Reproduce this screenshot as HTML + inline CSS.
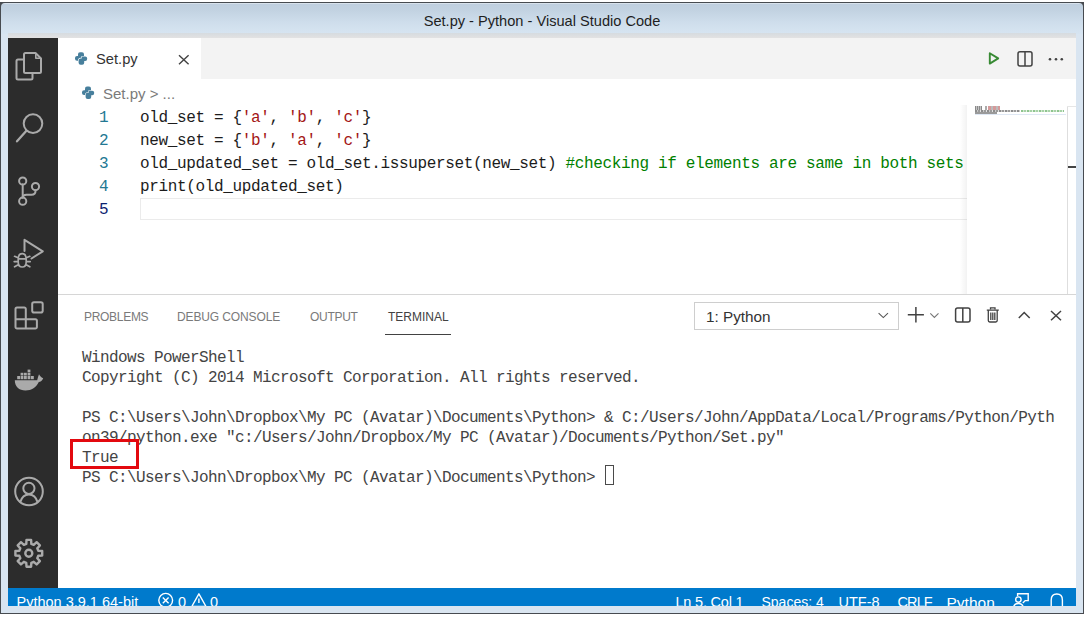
<!DOCTYPE html>
<html><head><meta charset="utf-8">
<style>
*{margin:0;padding:0;box-sizing:border-box}
html,body{width:1088px;height:621px;overflow:hidden;background:#fff;position:relative;font-family:"Liberation Sans",sans-serif}
.a{position:absolute}
.mono{font-family:"Liberation Mono",monospace;white-space:pre}
#frame{left:0;top:2px;width:1084px;height:612px;background:#474b50}
#title{left:1px;top:3px;width:1082px;height:610px;background:linear-gradient(#e4ecf3 0,#bfcfdf 1.5px,#c3d3e2 8px,#cfdeec 20px,#d6e4f1 30px,#d9e5f1 40px);border-radius:4px 4px 0 0}
#band{left:8px;top:33px;width:1068px;height:5px;background:linear-gradient(#d6dbe0,#e2e2e2)}
#titletxt{left:0;top:12px;width:1084px;text-align:center;font-size:14.6px;color:#1e1e1e;line-height:18px}
#content{left:8px;top:38px;width:1068px;height:568px;background:#fff;overflow:hidden}
#act{left:8px;top:38px;width:50px;height:550px;background:#2c2c2c}
#tabs{left:58px;top:38px;width:1018px;height:41px;background:#f3f3f3}
#tab{left:58px;top:38px;width:143px;height:41px;background:#fff}
#status{left:8px;top:588px;width:1068px;height:18px;background:#007acc;overflow:hidden;color:#fff;font-size:14.5px}
#status span{position:absolute;top:6px;line-height:17px;white-space:pre}
.ln{color:#237893;font-size:16px;line-height:23px;letter-spacing:-0.35px}
.code{color:#1c1c1c;font-size:16px;line-height:23px;letter-spacing:-0.35px}
.str{color:#a31515}
.cmt{color:#008000}
.term{color:#444;font-size:16px;line-height:20px;letter-spacing:-0.6px}
.ptitle{font-size:12px;color:#7a7a7a;letter-spacing:-0.3px;line-height:14px;white-space:pre}
svg{position:absolute;overflow:visible}
</style></head><body>
<div id="frame" class="a"></div>
<div id="title" class="a"></div>
<div id="band" class="a"></div>
<div id="titletxt" class="a">Set.py - Python - Visual Studio Code</div>
<div id="content" class="a"></div>
<div id="act" class="a"></div>
<div id="tabs" class="a"></div>
<div id="tab" class="a"></div>

<!-- tab -->
<div class="a" style="left:96px;top:50px;font-size:14.7px;color:#333;line-height:18px">Set.py</div>
<div class="a" style="left:103px;top:85px;font-size:15px;color:#7a7a7a;line-height:18px;white-space:pre">Set.py &gt; ...</div>

<!-- editor lines -->
<div class="a mono ln" style="left:99px;top:107px;width:20px">1<br>2<br>3<br>4<br><span style="color:#0b216f">5</span></div>
<div class="a" style="left:140px;top:198.3px;width:827px;height:21.5px;border:1.6px solid #ebebeb;border-right:none"></div>
<div class="a mono code" style="left:140px;top:107px">old_set = {<span class="str">'a'</span>, <span class="str">'b'</span>, <span class="str">'c'</span>}
new_set = {<span class="str">'b'</span>, <span class="str">'a'</span>, <span class="str">'c'</span>}
old_updated_set = old_set.issuperset(new_set) <span class="cmt">#checking if elements are same in both sets</span>
print(old_updated_set)
</div>
<!-- minimap shadow & ruler -->
<div class="a" style="left:960px;top:105px;width:7px;height:189px;background:linear-gradient(90deg,rgba(0,0,0,0),rgba(0,0,0,0.05))"></div>
<div class="a" style="left:1067px;top:106px;width:1px;height:188px;background:#dedede"></div>
<div class="a" style="left:1068px;top:166px;width:8px;height:2px;background:#444"></div>
<!-- minimap content -->
<div class="a" style="left:975px;top:106px;width:7px;height:1.6px;background:repeating-linear-gradient(90deg,#8a8a8a 0 1px,#c4c4c4 1px 2px)"></div>
<div class="a" style="left:985px;top:106px;width:2px;height:1.6px;background:#aaa"></div>
<div class="a" style="left:988px;top:106px;width:12px;height:1.6px;background:repeating-linear-gradient(90deg,#d49a9a 0 3px,#bbb 3px 5px)"></div>
<div class="a" style="left:975px;top:108px;width:7px;height:1.6px;background:repeating-linear-gradient(90deg,#8a8a8a 0 1px,#c4c4c4 1px 2px)"></div>
<div class="a" style="left:985px;top:108px;width:2px;height:1.6px;background:#aaa"></div>
<div class="a" style="left:988px;top:108px;width:12px;height:1.6px;background:repeating-linear-gradient(90deg,#d49a9a 0 3px,#bbb 3px 5px)"></div>
<div class="a" style="left:975px;top:110px;width:45px;height:1.6px;background:repeating-linear-gradient(90deg,#8c8c8c 0 2px,#c8c8c8 2px 3px,#9a9a9a 3px 5px,#e0e0e0 5px 6px)"></div>
<div class="a" style="left:1021px;top:110px;width:43px;height:1.6px;background:repeating-linear-gradient(90deg,#8fc48f 0 2px,#cfe6cf 2px 3px,#a6d2a6 3px 5px,#e4f2e4 5px 6px)"></div>
<div class="a" style="left:975px;top:112px;width:22px;height:1.6px;background:#9a9a9a"></div>
<div class="a" style="left:975px;top:114px;width:91px;height:1px;background:#dfe8f4"></div>
<div class="a" style="left:1067px;top:106px;width:9px;height:1px;background:#e6e6e6"></div>
<!-- panel -->
<div class="a" style="left:58px;top:294px;width:1018px;height:1px;background:#d6d6d6"></div>
<div class="a ptitle" style="left:84px;top:310px">PROBLEMS</div>
<div class="a ptitle" style="left:177px;top:310px;letter-spacing:-0.12px">DEBUG CONSOLE</div>
<div class="a ptitle" style="left:310px;top:310px">OUTPUT</div>
<div class="a ptitle" style="left:388px;top:310px;color:#424242;letter-spacing:0">TERMINAL</div>
<div class="a" style="left:385px;top:334px;width:66px;height:1px;background:#424242"></div>
<div class="a" style="left:694px;top:302px;width:205px;height:28px;border:1px solid #cecece;background:#fff"></div>
<div class="a" style="left:706px;top:307.5px;font-size:15.3px;color:#333;line-height:18px">1: Python</div>

<div class="a mono term" style="left:82px;top:347.70px">Windows PowerShell</div>
<div class="a mono term" style="left:82px;top:367.83px">Copyright (C) 2014 Microsoft Corporation. All rights reserved.</div>
<div class="a mono term" style="left:82px;top:408.09px">PS C:\Users\John\Dropbox\My PC (Avatar)\Documents\Python&gt; &amp; C:/Users/John/AppData/Local/Programs/Python/Pyth</div>
<div class="a mono term" style="left:82px;top:428.22px">on39/python.exe "c:/Users/John/Dropbox/My PC (Avatar)/Documents/Python/Set.py"</div>
<div class="a mono term" style="left:82px;top:448.35px">True</div>
<div class="a mono term" style="left:82px;top:468.48px">PS C:\Users\John\Dropbox\My PC (Avatar)\Documents\Python&gt; </div>
<div class="a" style="left:604.5px;top:465px;width:9px;height:20px;border:1px solid #4a4a4a"></div>
<div class="a" style="left:70px;top:439px;width:69px;height:29.5px;border:3.6px solid #e3090f"></div>

<div id="status" class="a">
<span style="left:8.5px">Python 3.9.1 64-bit</span>
<span style="left:170px">0</span>
<span style="left:202px">0</span>
<span style="left:667.5px;letter-spacing:-0.2px">Ln 5, Col 1</span>
<span style="left:753.5px;font-size:14px">Spaces: 4</span>
<span style="left:830.5px">UTF-8</span>
<span style="left:889.5px;letter-spacing:-0.9px">CRLF</span>
<span style="left:938.5px;font-size:15.5px">Python</span>
</div>

<svg width="1088" height="621" style="left:0;top:0" fill="none">
 <g stroke="#aaa" stroke-width="2" stroke-linejoin="round" stroke-linecap="round">
  <!-- files -->
  <path d="M23.5,59.5 H18 a1.5,1.5 0 0 0 -1.5,1.5 V78 a1.5,1.5 0 0 0 1.5,1.5 H31 a1.5,1.5 0 0 0 1.5,-1.5 V73.5"/>
  <path d="M25.5,53 H35.5 L41,58.5 V71.5 a1.5,1.5 0 0 1 -1.5,1.5 H25.5 a1.5,1.5 0 0 1 -1.5,-1.5 V54.5 a1.5,1.5 0 0 1 1.5,-1.5 Z"/>
  <path d="M35.8,54.5 V58.2 H39.5" stroke-width="1.6"/>
  <!-- search -->
  <circle cx="33" cy="123.6" r="9.3"/>
  <path d="M26.2,131 L17,141.3" stroke-width="2.3"/>
  <!-- git -->
  <circle cx="22.7" cy="181" r="3.6"/>
  <circle cx="35.5" cy="186.6" r="3.6"/>
  <circle cx="22.7" cy="201.2" r="3.6"/>
  <path d="M22.7,184.6 V197.6"/>
  <path d="M35.5,190.2 V191 Q35.5,194.8 31.5,194.8 H26.5 Q22.7,194.8 22.7,197.6"/>
  <!-- debug -->
  <path d="M24.5,251 V239.8 L42.8,251.3 L31.5,258.5"/>
  <path d="M18.2,259.5 Q18.2,253.6 22.2,253.6 Q26.2,253.6 26.2,259.5 V262 Q26.2,267 22.2,267 Q18.2,267 18.2,262 Z M18.4,258.8 H26 M14.6,256.3 L18,257.8 M14.2,261.6 H18 M14.6,266.8 L18.2,264.8 M29.8,256.3 L26.4,257.8 M30.2,261.6 H26.4 M29.8,266.8 L26.2,264.8" stroke-width="1.7"/>
  <!-- extensions -->
  <path d="M17,307.4 H24.3 a1.5,1.5 0 0 1 1.5,1.5 V319.3 H35.4 a1.5,1.5 0 0 1 1.5,1.5 V327.1 a1.5,1.5 0 0 1 -1.5,1.5 H17 a1.5,1.5 0 0 1 -1.5,-1.5 V308.9 a1.5,1.5 0 0 1 1.5,-1.5 Z M15.5,319.3 H25.8 M25.8,319.3 V328.6"/>
  <rect x="32.2" y="302.2" width="10.5" height="10.3" rx="1.8"/>
  <!-- account -->
  <circle cx="29" cy="491.5" r="13.8"/>
  <circle cx="28.9" cy="488.3" r="5.6"/>
  <path d="M20.3,502 C21.8,497 25,494.5 28.9,494.5 C32.8,494.5 36,497 37.5,502"/>
  <!-- gear -->
  <path stroke-width="2.4" d="M26.28,543.83 L26.50,539.90 L31.10,539.90 L31.32,543.83 L33.72,544.82 L36.65,542.20 L39.90,545.45 L37.28,548.38 L38.27,550.78 L42.20,551.00 L42.20,555.60 L38.27,555.82 L37.28,558.22 L39.90,561.15 L36.65,564.40 L33.72,561.78 L31.32,562.77 L31.10,566.70 L26.50,566.70 L26.28,562.77 L23.88,561.78 L20.95,564.40 L17.70,561.15 L20.32,558.22 L19.33,555.82 L15.40,555.60 L15.40,551.00 L19.33,550.78 L20.32,548.38 L17.70,545.45 L20.95,542.20 L23.88,544.82 Z"/>
  <circle cx="28.8" cy="553.3" r="3.5" stroke-width="2.4"/>
 </g>
 <!-- docker -->
 <g fill="#aaa">
  <path d="M14.8,380.2 H37.2 C37.8,378 38.3,376 39,374.3 C40,375.8 41,377.8 43.2,378.2 C42.4,380.6 40.6,381.8 38.8,382 C36.5,387.2 31.5,390.5 25.5,390.5 C19,390.5 14.8,386.5 14.8,380.2 Z"/>
  <rect x="17.2" y="376" width="2.8" height="3.2"/><rect x="20.6" y="376" width="2.8" height="3.2"/><rect x="24" y="376" width="2.8" height="3.2"/><rect x="27.6" y="376" width="2.8" height="3.2"/><rect x="31" y="376" width="2.8" height="3.2"/>
  <rect x="20.6" y="372.8" width="2.8" height="2.7"/><rect x="24" y="372.8" width="2.8" height="2.7"/><rect x="27.6" y="372.8" width="2.8" height="2.7"/>
  <rect x="27.6" y="369.6" width="2.8" height="2.7"/>
 </g>
 <!-- python icons -->
 <g transform="translate(75,52.2)"><g fill="#477f9c">
 <rect x="3" y="0" width="6" height="6" rx="2"/>
 <rect x="0" y="3.8" width="7.6" height="4.8" rx="2"/>
 <g stroke="#fff" stroke-width="1.1" paint-order="stroke">
 <path d="M7,4.3 H10.2 Q12.2,4.3 12.2,6.3 V6.6 Q12.2,8.8 10.2,8.8 H9.2 V10.5 Q9.2,12.6 7.2,12.6 H5.6 Q3.6,12.6 3.6,10.5 V8.2 Q3.6,6.2 5.6,6.2 H6.3 Q7,6.2 7,5.5 Z"/>
 </g>
</g></g>
 <g transform="translate(82,86.5)"><g fill="#477f9c">
 <rect x="3" y="0" width="6" height="6" rx="2"/>
 <rect x="0" y="3.8" width="7.6" height="4.8" rx="2"/>
 <g stroke="#fff" stroke-width="1.1" paint-order="stroke">
 <path d="M7,4.3 H10.2 Q12.2,4.3 12.2,6.3 V6.6 Q12.2,8.8 10.2,8.8 H9.2 V10.5 Q9.2,12.6 7.2,12.6 H5.6 Q3.6,12.6 3.6,10.5 V8.2 Q3.6,6.2 5.6,6.2 H6.3 Q7,6.2 7,5.5 Z"/>
 </g>
</g></g>
 <!-- tab close -->
 <path d="M179,55.2 L188.6,64.2 M188.6,55.2 L179,64.2" stroke="#424242" stroke-width="1.4"/>
 <!-- tab bar actions -->
 <path d="M989.8,53.2 L998.2,58.4 L989.8,63.6 Z" stroke="#388a34" stroke-width="1.9" stroke-linejoin="round"/>
 <rect x="1018" y="51.8" width="14" height="14.3" rx="2" stroke="#424242" stroke-width="1.5"/>
 <path d="M1025,52 V66" stroke="#424242" stroke-width="1.5"/>
 <g fill="#424242"><circle cx="1050" cy="59.3" r="1.3"/><circle cx="1056" cy="59.3" r="1.3"/><circle cx="1061.8" cy="59.3" r="1.3"/></g>
 <!-- panel actions -->
 <path d="M878.6,313.2 L883.3,317.6 L888,313.2" stroke="#555" stroke-width="1.1"/>
 <path d="M907.8,314.8 H923.9 M915.9,306.9 V322.6" stroke="#424242" stroke-width="1.5"/>
 <path d="M930.3,313.4 L934.4,317.5 L938.5,313.4" stroke="#777" stroke-width="1.1"/>
 <rect x="955.6" y="307.9" width="14.4" height="14" rx="2" stroke="#424242" stroke-width="1.5"/>
 <path d="M962.8,308 V322" stroke="#424242" stroke-width="1.5"/>
 <path d="M990.5,309.2 V307.9 H995 V309.2 M986.8,310.2 H998.8 M988.3,310.5 V320.6 Q988.3,322 989.7,322 H995.8 Q997.2,322 997.2,320.6 V310.5 M990.8,312.5 V320 M992.8,312.5 V320 M994.8,312.5 V320" stroke="#424242" stroke-width="1.3"/>
 <path d="M1018.8,318 L1024.2,312.5 L1029.7,318" stroke="#424242" stroke-width="1.5"/>
 <path d="M1051,311 L1061,320.2 M1061,311 L1051,320.2" stroke="#424242" stroke-width="1.5"/>
 <!-- status icons -->
 <g stroke="#fff" stroke-width="1.4">
  <circle cx="165.7" cy="600.3" r="6.9"/>
  <path d="M162.8,597.4 L168.6,603.2 M168.6,597.4 L162.8,603.2"/>
  <path d="M198.9,593.8 L206,606.5 H191.8 Z" stroke-linejoin="round"/>
  <path d="M198.9,598.5 V603"/>
  <path d="M1017.6,596.2 V593.7 H1028.2 V600.6 H1025.2 L1022.8,603" />
  <circle cx="1018.4" cy="599.6" r="2.7"/>
  <path d="M1013.6,607 Q1014.5,603.5 1018.4,603.5 Q1022.3,603.5 1023.2,607"/>
  <path d="M1051.2,607 V600 Q1051.2,594 1056.8,594 Q1062.4,594 1062.4,600 V607"/>
 </g>
</svg>
<!-- frame bottom cover -->
<div class="a" style="left:1px;top:606px;width:1082px;height:7px;background:#dae5f0"></div>
<div class="a" style="left:1076px;top:34px;width:7px;height:579px;background:#d9e5f1"></div>
<div class="a" style="left:1px;top:34px;width:7px;height:579px;background:#d9e5f1"></div>
</body></html>
